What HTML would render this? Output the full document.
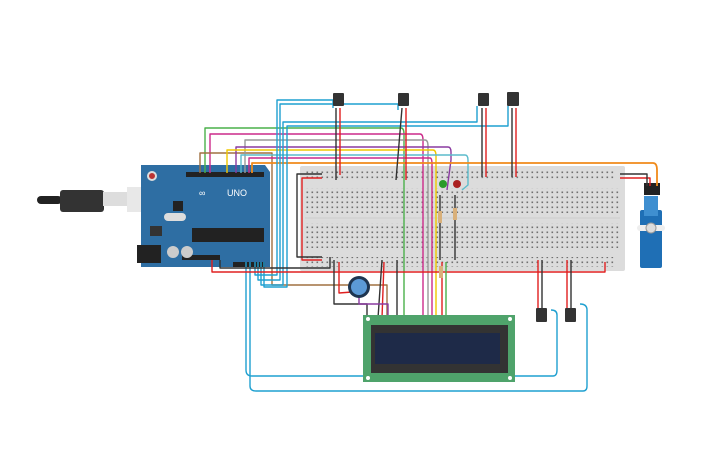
<!DOCTYPE html>
<html><head><meta charset="utf-8"><style>
html,body{margin:0;padding:0;background:#fff;width:725px;height:453px;overflow:hidden}
svg{display:block}
text{font-family:"Liberation Sans",sans-serif}
</style></head><body>
<svg width="725" height="453" viewBox="0 0 725 453" xmlns="http://www.w3.org/2000/svg">
<defs>
<pattern id="h" x="0" y="0" width="5" height="5" patternUnits="userSpaceOnUse"><rect x="1.5" y="1.5" width="1.6" height="1.6" fill="#555"/></pattern>
</defs>
<rect x="300" y="166" width="325" height="105" rx="2" fill="#dcdcdc"/>
<rect x="305" y="170" width="310" height="10" fill="url(#h)" opacity=".8"/>
<rect x="305" y="188" width="315" height="25" fill="url(#h)" opacity=".8"/>
<rect x="305" y="223" width="315" height="25" fill="url(#h)" opacity=".8"/>
<rect x="305" y="257" width="310" height="10" fill="url(#h)" opacity=".8"/>
<line x1="305" y1="218" x2="620" y2="218" stroke="#ccc"/>
<rect x="640" y="210" width="22" height="58" rx="2" fill="#1f6fb5"/>
<rect x="644" y="196" width="14" height="20" fill="#3f8fd0"/>
<rect x="637" y="225" width="28" height="6" rx="3" fill="#eee"/>
<circle cx="651" cy="228" r="5" fill="#ddd" stroke="#999"/>
<rect x="644" y="183" width="16" height="12" fill="#222"/>
<rect x="37" y="196" width="25" height="8" rx="4" fill="#222"/>
<rect x="60" y="190" width="44" height="22" rx="3" fill="#333"/>
<rect x="103" y="192" width="24" height="14" fill="#ddd"/>
<rect x="127" y="187" width="32" height="25" fill="#e8e8e8"/>
<path d="M141 165 H265 L270 172 V267 H141 Z" fill="#2e6ea3"/>
<rect x="137" y="245" width="24" height="18" fill="#222"/>
<rect x="186" y="172" width="78" height="5" fill="#222"/>
<rect x="182" y="255" width="38" height="5" fill="#222"/>
<rect x="233" y="262" width="32" height="5" fill="#222"/>
<rect x="192" y="228" width="72" height="14" fill="#222"/>
<rect x="150" y="226" width="12" height="10" fill="#333"/>
<rect x="173" y="201" width="10" height="10" fill="#222"/>
<circle cx="152" cy="176" r="4" fill="#b33" stroke="#ddd" stroke-width="2"/>
<rect x="164" y="213" width="22" height="8" rx="4" fill="#ddd"/>
<circle cx="173" cy="252" r="6" fill="#ccc"/><circle cx="187" cy="252" r="6" fill="#ccc"/>
<text x="227" y="196" fill="#fff" font-size="9">UNO</text>
<text x="199" y="196" fill="#fff" font-size="9">∞</text>
<g fill="none" stroke-width="1.4" stroke-linejoin="round">
<path d="M205 173 V128 H401 Q404 128 404 134 V318" stroke="#4ab04a"/>
<path d="M210 173 V134 H420 Q423 134 423 140 V318" stroke="#cc2a8a"/>
<path d="M200 173 V153 H272 V285 H387 V318" stroke="#a07040"/>
<path d="M245 173 V140 H425 Q428 140 428 146 V318" stroke="#999"/>
<path d="M236 173 V147 H448 Q451 147 451 152 V160 L447 190" stroke="#8a3aa0"/>
<path d="M227 173 V150 H433 Q436 150 436 156 V318" stroke="#f0c800"/>
<path d="M241 173 V155 H465 Q468 155 468 160 V185 L462 190" stroke="#5bbccc"/>
<path d="M249 173 V158 H430 Q432 158 432 164 V318" stroke="#cc2a8a"/>
<path d="M252 173 V163 H653 Q657 163 657 170 V186" stroke="#f08a1a" stroke-width="1.8"/>
<path d="M255 262 V275 H277 V100 H333 V108" stroke="#1fa0d0"/>
<path d="M258 262 V280 H280 V104 H398 V110" stroke="#1fa0d0"/>
<path d="M261 262 V285 H283 V122 H477 V106" stroke="#1fa0d0"/>
<path d="M264 262 V287 H287 V126 H508 V106" stroke="#1fa0d0"/>
<path d="M246 262 V370 Q246 376 252 376 H553 Q557 376 557 370 V315 Q557 310 551 310" stroke="#1fa0d0"/>
<path d="M250 262 V386 Q250 391 256 391 H583 Q587 391 587 386 V310 Q587 304 580 304" stroke="#1fa0d0"/>
<path d="M212 260 V272 H605 V262" stroke="#e02020"/>
<path d="M220 260 V268 H330 V257" stroke="#333"/>
<path d="M340 108 V175" stroke="#e02020"/>
<path d="M336 108 V180" stroke="#333"/>
<path d="M406 108 V180" stroke="#e02020"/><path d="M402 108 L396 180" stroke="#333"/>
<path d="M486 108 V177" stroke="#e02020"/><path d="M482 108 V177" stroke="#333"/>
<path d="M516 108 V177" stroke="#e02020"/><path d="M512 108 V177" stroke="#333"/>
<path d="M322 178 H302 V260 H322" stroke="#e02020"/>
<path d="M322 174 H297 V257 H322" stroke="#333"/>
<path d="M620 178 H650 V186" stroke="#e02020"/><path d="M620 174 H647 V186" stroke="#333"/>
<path d="M334 260 V304 H367 V318" stroke="#333"/>
<path d="M339 262 V293 L352 292" stroke="#e02020"/>
<path d="M382 260 L378 318" stroke="#333"/><path d="M384 262 L382 318" stroke="#e02020"/>
<path d="M397 260 V318" stroke="#333"/>
<path d="M359 297 V304 H388 V318" stroke="#8a3aa0"/>
<path d="M440 195 V260 M455 195 V260" stroke="#333"/>
<path d="M442 262 V318" stroke="#e02020"/><path d="M446 262 V318" stroke="#4ab04a"/>
<path d="M538 260 V310" stroke="#e02020"/><path d="M542 260 V310" stroke="#333"/>
<path d="M567 260 V310" stroke="#e02020"/><path d="M571 260 V310" stroke="#333"/>
</g>
<circle cx="443" cy="184" r="4" fill="#2a9a2a"/><circle cx="457" cy="184" r="4" fill="#aa2020"/>
<rect x="438" y="211" width="4" height="12" fill="#d9b07a"/><rect x="453" y="208" width="4" height="12" fill="#d9b07a"/>
<rect x="439" y="266" width="4" height="12" fill="#d9b07a"/>
<g fill="#333"><rect x="333" y="93" width="11" height="13" rx="1"/><rect x="398" y="93" width="11" height="13" rx="1"/><rect x="478" y="93" width="11" height="13" rx="1"/><rect x="507" y="92" width="12" height="14" rx="1"/><rect x="536" y="308" width="11" height="14" rx="1"/><rect x="565" y="308" width="11" height="14" rx="1"/></g>
<circle cx="359" cy="287" r="11" fill="#1e3550"/><circle cx="359" cy="287" r="8" fill="#5c9ad6"/>
<rect x="363" y="315" width="152" height="67" fill="#4fa36b"/>
<rect x="371" y="325" width="137" height="48" fill="#333"/>
<rect x="375" y="333" width="125" height="31" fill="#1e2a48"/>
<g fill="#fff"><circle cx="368" cy="319" r="2"/><circle cx="510" cy="319" r="2"/><circle cx="368" cy="378" r="2"/><circle cx="510" cy="378" r="2"/></g>
</svg>
</body></html>
